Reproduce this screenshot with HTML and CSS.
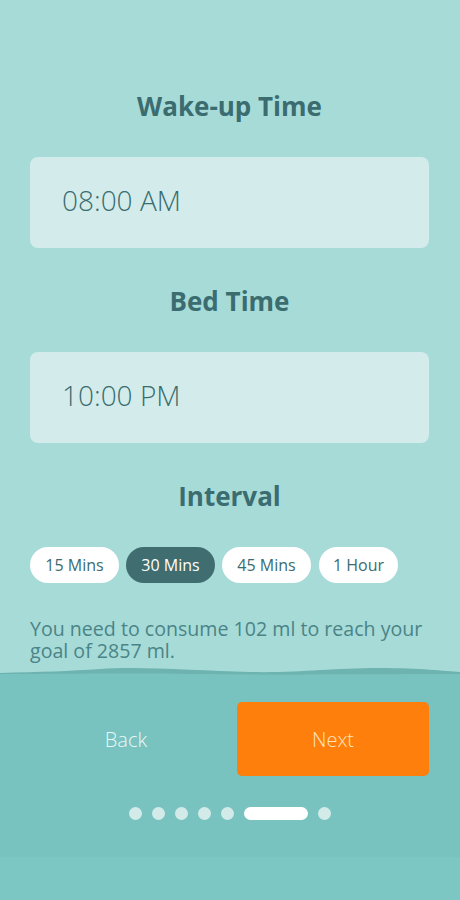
FILE: index.html
```html
<!DOCTYPE html>
<html>
<head>
<meta charset="utf-8">
<link rel="stylesheet" href="styles.css">
</head>
<body>
<div class="screen">
  <div class="top">
    <h2 class="title first">Wake-up Time</h2>
    <div class="field">08:00 AM</div>
    <h2 class="title">Bed Time</h2>
    <div class="field">10:00 PM</div>
    <h2 class="title">Interval</h2>
    <div class="chips">
      <span class="chip c1">15 Mins</span>
      <span class="chip c2 active">30 Mins</span>
      <span class="chip c3">45 Mins</span>
      <span class="chip c4">1 Hour</span>
    </div>
    <p class="note">You need to consume 102 ml to reach your goal of 2857 ml.</p>
  </div>
  <svg class="wave" viewBox="0 0 460 16" preserveAspectRatio="none">
    <path d="M0 8 C40 7 70 6 100 4 C140 1 200 6 250 7 C300 8 330 3 380 3 C420 3 445 6 460 7 L460 16 L0 16 Z" fill="#6db3b0"/>
    <path d="M0 9 C60 9 120 8 200 9 C280 10 360 9 460 9 L460 16 L0 16 Z" fill="#78c2bf"/>
  </svg>
  <div class="bottom">
    <div class="actions">
      <button class="btn back">Back</button>
      <button class="btn next">Next</button>
    </div>
    <div class="dots">
      <span class="dot"></span>
      <span class="dot"></span>
      <span class="dot"></span>
      <span class="dot"></span>
      <span class="dot"></span>
      <span class="dot current"></span>
      <span class="dot"></span>
    </div>
  </div>
  <div class="footer"></div>
</div>
</body>
</html>
```
FILE: styles.css
```css
html, body {
  margin: 0;
  padding: 0;
}
body {
  background: #a7dbd8;
  font-family: "Open Sans", "Noto Sans", sans-serif;
}
.screen {
  width: 460px;
  height: 900px;
  display: flex;
  flex-direction: column;
  background: #a7dbd8;
}
.top {
  padding: 90px 31px 0 30px;
  display: flex;
  flex-direction: column;
}
.title {
  margin: 37px 0 35px;
  font-size: 26px;
  line-height: 32px;
  font-weight: 700;
  color: #3a6c70;
  text-align: center;
}
.title.first {
  margin-top: 0;
}
.field {
  height: 91px;
  border-radius: 8px;
  background: #d3eceb;
  box-sizing: border-box;
  padding-left: 32px;
  padding-bottom: 6px;
  display: flex;
  align-items: center;
  font-size: 28px;
  font-weight: 300;
  color: #3a6c70;
}
.chips {
  display: flex;
  gap: 7px;
  height: 36px;
}
.chip {
  height: 36px;
  border-radius: 18px;
  background: #ffffff;
  color: #3a6c70;
  font-size: 16px;
  display: flex;
  align-items: center;
  justify-content: center;
  width: 89px;
}
.chip.c4 {
  width: 79px;
  margin-left: 1px;
}
.chip.active {
  background: #3f6d70;
  color: #ffffff;
}
.note {
  margin: 35px 0 0;
  font-size: 19.6px;
  line-height: 22px;
  font-weight: 400;
  color: #4a8487;
}
.wave {
  display: block;
  width: 460px;
  height: 16px;
  margin-top: 3px;
}
.bottom {
  background: #78c2bf;
  padding: 21px 31px 37px 30px;
  display: flex;
  flex-direction: column;
  align-items: center;
}
.actions {
  display: flex;
  gap: 15px;
  width: 100%;
}
.btn {
  flex: 1;
  height: 74px;
  border: none;
  border-radius: 5px;
  font-family: "Open Sans", "Noto Sans", sans-serif;
  font-size: 20px;
  font-weight: 300;
  background: transparent;
  padding: 0;
}
.back {
  color: #eaf8f6;
}
.next {
  background: #fe7f0b;
  color: #ffe4bf;
}
.dots {
  margin-top: 31px;
  display: flex;
  gap: 10px;
  height: 13px;
}
.dot {
  width: 13px;
  height: 13px;
  border-radius: 50%;
  background: #d2ebe9;
}
.dot.current {
  width: 64px;
  border-radius: 7px;
  background: #ffffff;
}
.footer {
  flex: 1;
  background: #7cc7c3;
}
```
